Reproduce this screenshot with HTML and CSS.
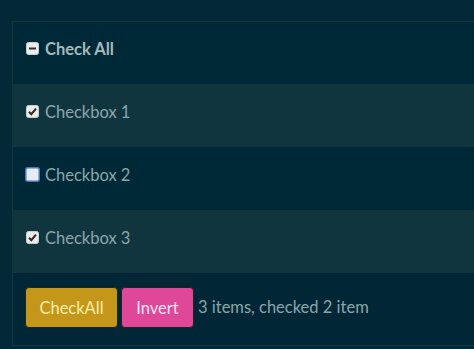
FILE: index.html
```html
<!DOCTYPE html>
<html>
<head>
<meta charset="utf-8">
<link rel="stylesheet" href="styles.css">
</head>
<body>
<div class="table">
  <div class="row head">
    <span class="box"><svg width="13" height="13" viewBox="0 0 13 13"><rect x="0.5" y="0.5" width="12" height="12" rx="2" fill="#e9eced" stroke="#c9d0d2"/><rect x="3" y="5.5" width="7" height="2" fill="#3a2a2a"/></svg></span>
    <span class="label bold">Check All</span>
  </div>
  <div class="row odd">
    <span class="box"><svg width="13" height="13" viewBox="0 0 13 13"><rect x="0.5" y="0.5" width="12" height="12" rx="2" fill="#e9eced" stroke="#c9d0d2"/><path d="M3 6.8 L5.3 9.2 L10 3.6" fill="none" stroke="#3a2424" stroke-width="2"/></svg></span>
    <span class="label">Checkbox 1</span>
  </div>
  <div class="row">
    <span class="box wide"><svg width="15" height="15" viewBox="0 0 15 15"><rect x="0.75" y="0.75" width="13.5" height="13.5" rx="2" fill="#e6ecf3" stroke="#4d79b8" stroke-width="1.5"/></svg></span>
    <span class="label">Checkbox 2</span>
  </div>
  <div class="row odd">
    <span class="box"><svg width="13" height="13" viewBox="0 0 13 13"><rect x="0.5" y="0.5" width="12" height="12" rx="2" fill="#e9eced" stroke="#c9d0d2"/><path d="M3 6.8 L5.3 9.2 L10 3.6" fill="none" stroke="#3a2424" stroke-width="2"/></svg></span>
    <span class="label">Checkbox 3</span>
  </div>
  <div class="row foot">
    <button class="btn gold">CheckAll</button>
    <button class="btn pink">Invert</button>
    <span class="label foot-text">3 items, checked 2 item</span>
  </div>
</div>
</body>
</html>
```
FILE: styles.css
```css
html, body {
  margin: 0;
  padding: 0;
  background: #032937;
  overflow: hidden;
}
body {
  font-family: "Source Sans Pro", Lato, "Open Sans", sans-serif;
  font-size: 16.5px;
  color: #8ba6ab;
  padding: 21px 0 0 12px;
}
.table {
  width: 480px;
  border-top: 1px solid #0f3641;
  border-left: 1px solid #0f3641;
  border-bottom: 1px solid #0f3641;
  background: #002937;
}
.row {
  box-sizing: border-box;
  height: 63px;
  display: flex;
  align-items: flex-start;
  padding: 18px 0 0 12px;
  line-height: 20px;
}
.row.head {
  height: 62px;
  padding-top: 17px;
}
.row.odd {
  background: #11353f;
}
.row.foot {
  height: 72px;
  background: #012636;
  border-top: 1px solid #002433;
  gap: 3px;
  align-items: center;
  padding-top: 0;
}
.box {
  display: flex;
  align-items: center;
  width: 13px;
  height: 20px;
  margin-left: 1px;
  margin-right: 6px;
  margin-top: -1px;
}
.box.wide {
  width: 15px;
  margin-left: 0;
  margin-right: 5px;
}
.label {
  white-space: nowrap;
}
.bold {
  font-weight: bold;
  color: #a3babe;
}
.foot-text {
  margin-top: -5px;
  margin-left: 1px;
}
.btn {
  font-family: inherit;
  font-size: 16.5px;
  height: 41px;
  border-radius: 4px;
  border: 1px solid #1d2a1a;
  padding: 0;
  margin-top: -4px;
}
.gold {
  background: #c4961a;
  color: #fdeea6;
  width: 93px;
}
.pink {
  background: #df4898;
  color: #fde3f0;
  width: 73px;
  border-color: #2a1d2a;
}
```
